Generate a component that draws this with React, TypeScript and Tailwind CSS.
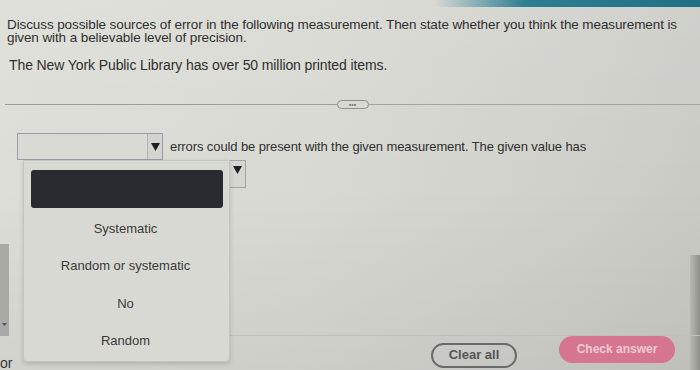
import React from "react";

const font = { fontFamily: '"Liberation Sans", Arial, sans-serif' };

function Arrow({ className = "" }: { className?: string }) {
  return (
    <svg width="9" height="8" viewBox="0 0 9 8" className={className}>
      <polygon points="0,0 9,0 4.5,8" fill="#1f1f22" />
    </svg>
  );
}

export default function App() {
  return (
    <div
      className="relative w-[700px] h-[370px] overflow-hidden text-[#2f2f2f]"
      style={font}
    >
      <div className="absolute inset-0 bg-[linear-gradient(100deg,#deded8_0%,#d9d9d3_45%,#d0d0cb_80%,#c9c9c4_100%)]" />
      <div className="absolute inset-0 bg-[linear-gradient(180deg,rgba(255,255,255,0.08)_0%,rgba(0,0,0,0)_50%,rgba(0,0,0,0.05)_100%)]" />
      {/* teal top strip */}
      <div className="absolute top-0 left-0 w-[700px] h-[7px] bg-[linear-gradient(90deg,rgba(40,120,140,0)_0%,rgba(40,120,140,0)_62%,#2f7f93_75%,#1f6f86_100%)]" />
      {/* left scroll strip */}
      <div className="absolute left-0 top-[244px] w-[9px] h-[92px] bg-[#a9a9a5] flex items-end justify-center pb-[10px]">
        <svg width="5" height="3" viewBox="0 0 5 3">
          <polygon points="0,0 5,0 2.5,3" fill="#555" />
        </svg>
      </div>
      {/* right dark strip */}
      <div className="absolute right-0 top-[255px] w-[10px] h-[115px] bg-[linear-gradient(90deg,#b9b9b4,#8f8f8b)]" />

      <div className="relative flex flex-col h-full">
        <div className="pl-[7px] pt-[18px] pr-[10px] text-[13.5px] leading-[13px] tracking-[-0.1px]">
          <p>
            Discuss possible sources of error in the following measurement. Then state whether you think the measurement is
            given with a believable level of precision.
          </p>
          <p className="mt-[15px] pl-[2px] text-[14px]">The New York Public Library has over 50 million printed items.</p>
        </div>

        {/* divider */}
        <div className="mt-[28px] flex items-center pl-[5px]">
          <div className="h-px flex-1 max-w-[335px] bg-[#9d9d99]" />
          <div className="w-[32px] h-[9px] rounded-full border border-[#8f8f8b] flex items-center justify-center text-[7px] leading-[7px] text-[#777] bg-[#d9d9d3]">
            •••
          </div>
          <div className="h-px flex-1 bg-[#a3a39f]" />
        </div>

        {/* select row */}
        <div className="mt-[24px] flex items-center pl-[17px]">
          <div className="w-[146px] h-[27px] border border-[#9a9aa8] bg-[#dadad4] flex items-stretch justify-end">
            <div className="w-[15px] border-l border-[#b5b5b0] flex items-center justify-center bg-[#d4d4ce]">
              <Arrow />
            </div>
          </div>
          <span className="ml-[7px] text-[13px] tracking-[-0.1px]">
            errors could be present with the given measurement. The given value has
          </span>
        </div>

        {/* second select arrow */}
        <div className="pl-[228px]">
          <div className="w-[18px] h-[28px] border border-[#a3a39f] flex items-start justify-center pt-[5px] bg-[#d6d6d0]">
            <Arrow />
          </div>
        </div>

        <div className="flex-1" />

        {/* footer */}
        <div className="ml-[230px] border-t border-[#c0c0bb] h-[35px] flex items-center pl-[201px] gap-[42px]">
          <div className="mt-[4px] w-[86px] h-[25px] rounded-full border-2 border-[#6a6a6a] flex items-center justify-center text-[13px] font-bold text-[#555]">
            Clear all
          </div>
          <div className="mt-[-8px] w-[116px] h-[27px] rounded-full bg-[#d67590] flex items-center justify-center text-[12px] font-bold text-[#f2c9d3]">
            Check answer
          </div>
        </div>
      </div>

      {/* dropdown overlay */}
      <div className="absolute left-[23px] top-[160px] w-[207px] h-[202px] bg-[#d9d9d3] border border-[#c5c5c0] rounded-b-[4px] shadow-[0_2px_4px_rgba(0,0,0,0.15)] flex flex-col items-center">
        <div className="mt-[9px] w-[192px] h-[38px] rounded-[3px] bg-[#2a2b30]" />
        <div className="mt-[2px] flex flex-col items-center w-full pr-[2px] text-[13px] text-[#3a3a3a]">
          <div className="h-[37px] flex items-center">Systematic</div>
          <div className="h-[38px] flex items-center">Random or systematic</div>
          <div className="h-[37px] flex items-center">No</div>
          <div className="h-[37px] flex items-center">Random</div>
        </div>
      </div>

      {/* bottom-left "or" */}
      <div className="absolute left-0 top-[357px] text-[14px] leading-[13px] text-[#333]">or</div>
    </div>
  );
}
